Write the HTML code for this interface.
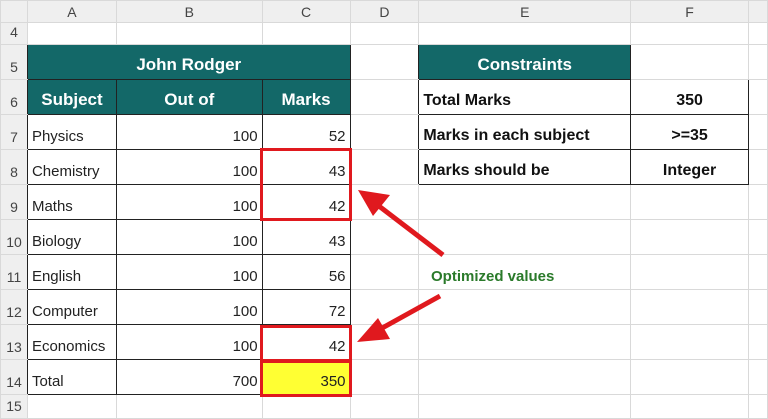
<!DOCTYPE html>
<html><head><meta charset="utf-8"><style>
*{margin:0;padding:0;box-sizing:border-box}
body{width:768px;height:418px;overflow:hidden;background:#fff;font-family:"Liberation Sans",sans-serif;position:relative}
table{border-collapse:collapse;table-layout:fixed;position:absolute;left:0;top:0}
td{border:1px solid #d9d9d9;font-size:15px;color:#222;padding:0 4px;white-space:nowrap;overflow:hidden;vertical-align:bottom;padding-bottom:4px}
tr.h td{background:#efefef;color:#444;text-align:center;vertical-align:middle;padding:0;font-size:14px}
td.rh{background:#efefef;color:#444;text-align:center;font-size:14px;padding:0 0 4px 0}
td.rk{border-right-color:#222}
.t{background:#136868;color:#fff;font-weight:bold;text-align:center;font-size:17px;border-color:#222}
.b{border:1px solid #222}
.r{text-align:right}
.c{text-align:center}
.bo{font-weight:bold;font-size:16px;color:#111}
.box{position:absolute;border:3px solid #e0191e}
</style></head><body>
<table>
<colgroup><col style="width:27px"><col style="width:89px"><col style="width:146px"><col style="width:88px"><col style="width:69px"><col style="width:212px"><col style="width:118px"><col style="width:19px"></colgroup>
<tr class="h" style="height:22px"><td></td><td>A</td><td>B</td><td>C</td><td>D</td><td>E</td><td>F</td><td></td></tr>
<tr style="height:22px"><td class="rh">4</td><td></td><td></td><td></td><td></td><td></td><td></td><td></td></tr>
<tr style="height:35px"><td class="rh rk">5</td><td class="t" colspan="3">John Rodger</td><td class="rk"></td><td class="t">Constraints</td><td></td><td></td></tr>
<tr style="height:35px"><td class="rh rk">6</td><td class="t">Subject</td><td class="t">Out of</td><td class="t">Marks</td><td class="rk"></td><td class="b bo">Total Marks</td><td class="b bo c">350</td><td></td></tr>
<tr style="height:35px"><td class="rh rk">7</td><td class="b">Physics</td><td class="b r">100</td><td class="b r">52</td><td class="rk"></td><td class="b bo">Marks in each subject</td><td class="b bo c">&gt;=35</td><td></td></tr>
<tr style="height:35px"><td class="rh rk">8</td><td class="b">Chemistry</td><td class="b r">100</td><td class="b r">43</td><td class="rk"></td><td class="b bo">Marks should be</td><td class="b bo c">Integer</td><td></td></tr>
<tr style="height:35px"><td class="rh rk">9</td><td class="b">Maths</td><td class="b r">100</td><td class="b r">42</td><td></td><td></td><td></td><td></td></tr>
<tr style="height:35px"><td class="rh rk">10</td><td class="b">Biology</td><td class="b r">100</td><td class="b r">43</td><td></td><td></td><td></td><td></td></tr>
<tr style="height:35px"><td class="rh rk">11</td><td class="b">English</td><td class="b r">100</td><td class="b r">56</td><td></td><td></td><td></td><td></td></tr>
<tr style="height:35px"><td class="rh rk">12</td><td class="b">Computer</td><td class="b r">100</td><td class="b r">72</td><td></td><td></td><td></td><td></td></tr>
<tr style="height:35px"><td class="rh rk">13</td><td class="b">Economics</td><td class="b r">100</td><td class="b r">42</td><td></td><td></td><td></td><td></td></tr>
<tr style="height:35px"><td class="rh rk">14</td><td class="b">Total</td><td class="b r">700</td><td class="b r" style="background:#ffff33">350</td><td></td><td></td><td></td><td></td></tr>
<tr style="height:24px"><td class="rh">15</td><td></td><td></td><td></td><td></td><td></td><td></td><td></td></tr>
</table>
<div class="box" style="left:260px;top:148px;width:92px;height:73px"></div>
<div class="box" style="left:260px;top:325px;width:92px;height:37px"></div>
<div class="box" style="left:260px;top:360px;width:92px;height:37px"></div>
<div style="position:absolute;left:431px;top:268px;color:#2a7a2a;font-weight:bold;font-size:15px">Optimized values</div>
<svg width="768" height="418" style="position:absolute;left:0;top:0">
<line x1="443" y1="255" x2="375" y2="203" stroke="#e0191e" stroke-width="5"/>
<polygon points="358,190 390,195 373,216" fill="#e0191e"/>
<line x1="440" y1="296" x2="375" y2="332" stroke="#e0191e" stroke-width="5"/>
<polygon points="357,342 378,318 390,339" fill="#e0191e"/>
</svg>
</body></html>
